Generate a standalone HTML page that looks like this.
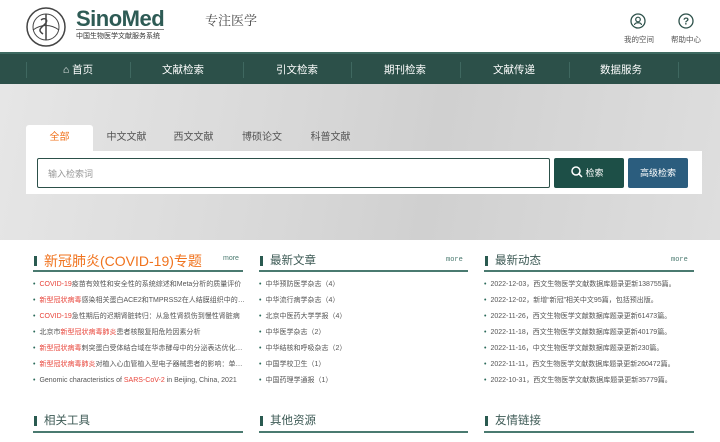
<!DOCTYPE html>
<html><head><meta charset="utf-8"><style>
*{margin:0;padding:0;box-sizing:border-box}
body{width:720px;height:442px;overflow:hidden;background:#fff;font-family:"Liberation Sans","Noto Sans CJK SC",sans-serif;position:relative}
.abs{position:absolute}
.nav{top:52px;left:0;width:720px;height:32px;background:#2c5049;border-top:2px solid #3e6a61}
.nav span{position:absolute;top:8px;color:#fff;font-size:10.5px;transform:translateX(-50%);white-space:nowrap}
.nav i{position:absolute;top:8px;width:1px;height:16px;background:#3f6860}
.banner{top:84px;left:0;width:720px;height:156px;background:linear-gradient(100deg,#e6e6e6 0%,#d8d8d8 40%,#d0d0d0 60%,#dedede 100%)}
.tab{top:125px;height:26px;font-size:10px;color:#555;text-align:center;line-height:26px}
.h{font-size:11.5px;color:#3d5a55}
.bar{width:3px;height:10px;background:#2a5a50}
.line{height:2px;background:#4a7a70}
ul{list-style:none;position:absolute;font-size:7px;color:#555}
li{height:16px;line-height:16px;white-space:nowrap;overflow:hidden;text-overflow:ellipsis}
li:before{content:"•";color:#2a6a5a;margin-right:4px}
.r{color:#e8443a}
.more{font-size:7px;color:#4b7a70;font-family:"Liberation Mono",monospace}
</style></head><body>
<svg class="abs" style="left:25px;top:6px" width="42" height="42" viewBox="0 0 42 42"><circle cx="21" cy="21" r="19" fill="none" stroke="#444" stroke-width="1.5"/><circle cx="21" cy="21" r="13" fill="none" stroke="#444" stroke-width="1"/><path d="M21 8v26M16 14c4-3 8 0 4 4s-8 6-2 10" fill="none" stroke="#444" stroke-width="1.5"/><path d="M8 24c8-6 18-6 26 0" fill="none" stroke="#444"/></svg>
<div class="abs" style="left:76px;top:6px;font-size:22px;font-weight:bold;color:#2e5b55;letter-spacing:-0.5px">SinoMed</div>
<div class="abs" style="left:76px;top:29px;width:88px;height:1px;background:#888"></div>
<div class="abs" style="left:76px;top:31px;font-size:7px;color:#333">中国生物医学文献服务系统</div>
<div class="abs" style="left:205px;top:10px;font-size:13px;color:#444;font-family:'Noto Serif CJK SC',serif">专注医学</div>
<svg class="abs" style="left:630px;top:13px" width="16" height="16"><circle cx="8" cy="8" r="7" fill="none" stroke="#2c5049" stroke-width="1.3"/><circle cx="8" cy="6.5" r="2.3" fill="none" stroke="#2c5049" stroke-width="1.2"/><path d="M4.5 12c0-3 7-3 7 0" fill="none" stroke="#2c5049" stroke-width="1.2"/></svg>
<svg class="abs" style="left:678px;top:13px" width="16" height="16"><circle cx="8" cy="8" r="7" fill="none" stroke="#2c5049" stroke-width="1.3"/><text x="8" y="11.5" font-size="10" font-weight="bold" text-anchor="middle" fill="#2c5049" font-family="Liberation Sans">?</text></svg>
<div class="abs" style="left:624px;top:34px;font-size:7.5px;color:#555">我的空间</div>
<div class="abs" style="left:671px;top:34px;font-size:7.5px;color:#555">帮助中心</div>
<div class="abs nav">
<i style="left:26px"></i><i style="left:130px"></i><i style="left:243px"></i><i style="left:351px"></i><i style="left:460px"></i><i style="left:569px"></i><i style="left:678px"></i>
<span style="left:78px">⌂ 首页</span><span style="left:183px">文献检索</span><span style="left:297px">引文检索</span><span style="left:405px">期刊检索</span><span style="left:514px">文献传递</span><span style="left:621px">数据服务</span>
</div>
<div class="abs banner"></div>
<div class="abs tab" style="left:26px;width:67px;background:#fff;color:#f0731e;border-radius:3px 3px 0 0">全部</div>
<div class="abs tab" style="left:93px;width:67px">中文文献</div>
<div class="abs tab" style="left:160px;width:67px">西文文献</div>
<div class="abs tab" style="left:227px;width:70px">博硕论文</div>
<div class="abs tab" style="left:297px;width:67px">科普文献</div>
<div class="abs" style="left:26px;top:151px;width:676px;height:43px;background:#fff"></div>
<div class="abs" style="left:37px;top:158px;width:513px;height:30px;border:1.5px solid #2c5049;border-radius:2px;font-size:9px;color:#999;padding:8px 10px">输入检索词</div>
<div class="abs" style="left:554px;top:158px;width:70px;height:30px;background:#1d4f47;border-radius:2px;color:#fff;font-size:9px;line-height:30px;padding-left:17px"><svg width="12" height="12" style="vertical-align:-2px"><circle cx="5" cy="5" r="4" fill="none" stroke="#fff" stroke-width="1.5"/><path d="M8 8l3 3" stroke="#fff" stroke-width="1.5"/></svg> 检索</div>
<div class="abs" style="left:628px;top:158px;width:60px;height:30px;background:#2b5d7e;border-radius:2px;color:#fff;font-size:9px;line-height:30px;text-align:center">高级检索</div>
<div class="abs bar" style="left:34px;top:256px"></div>
<div class="abs" style="left:44px;top:251px;font-size:14px;color:#f0731e">新冠肺炎(COVID-19)专题</div>
<div class="abs" style="left:223px;top:255px;font-size:7px;color:#4b7a70">more</div>
<div class="abs line" style="left:33px;top:270px;width:210px"></div>
<ul style="left:33px;top:277px;width:212px">
<li><span class="r">COVID-19</span>疫苗有效性和安全性的系统综述和Meta分析的质量评价</li>
<li><span class="r">新型冠状病毒</span>感染相关蛋白ACE2和TMPRSS2在人结膜组织中的表达</li>
<li><span class="r">COVID-19</span>急性期后的迟期肾脏转归：从急性肾损伤到慢性肾脏病</li>
<li>北京市<span class="r">新型冠状病毒肺炎</span>患者核酸复阳危险因素分析</li>
<li><span class="r">新型冠状病毒</span>刺突蛋白受体结合域在华赤酵母中的分泌表达优化及纯化</li>
<li><span class="r">新型冠状病毒肺炎</span>对植入心血管植入型电子器械患者的影响：单中心研究</li>
<li style="overflow:visible">Genomic characteristics of <span class="r">SARS-CoV-2</span> in Beijing, China, 2021</li>
</ul>
<div class="abs bar" style="left:260px;top:256px"></div>
<div class="abs h" style="left:270px;top:252px">最新文章</div>
<div class="abs more" style="left:446px;top:256px">more</div>
<div class="abs line" style="left:259px;top:270px;width:209px"></div>
<ul style="left:259px;top:277px;width:209px">
<li>中华预防医学杂志（4）</li><li>中华流行病学杂志（4）</li><li>北京中医药大学学报（4）</li><li>中华医学杂志（2）</li><li>中华结核和呼吸杂志（2）</li><li>中国学校卫生（1）</li><li>中国药理学通报（1）</li>
</ul>
<div class="abs bar" style="left:485px;top:256px"></div>
<div class="abs h" style="left:495px;top:252px">最新动态</div>
<div class="abs more" style="left:671px;top:256px">more</div>
<div class="abs line" style="left:484px;top:270px;width:210px"></div>
<ul style="left:484px;top:277px;width:212px">
<li>2022-12-03，西文生物医学文献数据库题录更新138755篇。</li>
<li>2022-12-02，新增“新冠”相关中文95篇，包括预出版。</li>
<li>2022-11-26，西文生物医学文献数据库题录更新61473篇。</li>
<li>2022-11-18，西文生物医学文献数据库题录更新40179篇。</li>
<li>2022-11-16，中文生物医学文献数据库题录更新230篇。</li>
<li>2022-11-11，西文生物医学文献数据库题录更新260472篇。</li>
<li>2022-10-31，西文生物医学文献数据库题录更新35779篇。</li>
</ul>
<div class="abs bar" style="left:34px;top:416px"></div><div class="abs h" style="left:44px;top:412px">相关工具</div><div class="abs line" style="left:33px;top:431px;width:210px"></div>
<div class="abs bar" style="left:260px;top:416px"></div><div class="abs h" style="left:270px;top:412px">其他资源</div><div class="abs line" style="left:259px;top:431px;width:209px"></div>
<div class="abs bar" style="left:485px;top:416px"></div><div class="abs h" style="left:495px;top:412px">友情链接</div><div class="abs line" style="left:484px;top:431px;width:210px"></div>
</body></html>
